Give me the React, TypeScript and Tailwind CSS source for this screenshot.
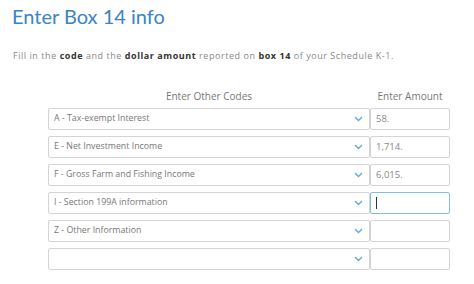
import React from 'react';

const rows = [
  { code: 'A - Tax-exempt Interest', amount: '58.' },
  { code: 'E - Net Investment Income', amount: '1,714.' },
  { code: 'F - Gross Farm and Fishing Income', amount: '6,015.' },
  { code: 'I - Section 199A information', amount: '', focused: true },
  { code: 'Z - Other Information', amount: '' },
  { code: '', amount: '' },
];

function Chevron() {
  return (
    <svg width="9" height="6" viewBox="0 0 9 6" fill="none">
      <path d="M1 1l3.5 3.5L8 1" stroke="#5fa9d8" strokeWidth="1.3" />
    </svg>
  );
}

export default function App() {
  return (
    <div
      className="w-[474px] h-[284px] bg-white overflow-hidden"
      style={{ fontFamily: '"Open Sans", "Noto Sans", sans-serif' }}
    >
      <h1
        className="pl-[12px] pt-[2px] text-[20px] leading-[28px] text-[#3a84c4] font-normal"
        style={{ fontFamily: 'Lato, sans-serif' }}
      >
        Enter Box 14 info
      </h1>
      <p className="pl-[13px] mt-[20px] text-[9px] leading-[12px] tracking-[0.55px] text-[#888]">
        Fill in the <b className="text-[#333] font-bold">code</b> and the{' '}
        <b className="text-[#333] font-bold">dollar amount</b> reported on{' '}
        <b className="text-[#333] font-bold">box 14</b> of your Schedule K-1.
      </p>
      <div className="ml-[48px] w-[402px] mt-[28px]">
        <div className="flex text-[10px] leading-[12px] text-[#777]">
          <div className="w-[322px] text-center">Enter Other Codes</div>
          <div className="w-[80px] text-center">Enter Amount</div>
        </div>
        <div className="mt-[6px] flex flex-col gap-[6px]">
          {rows.map((r, i) => (
            <div key={i} className="flex h-[22px]">
              <div className="w-[322px] flex items-center justify-between border border-[#d4d4d4] rounded-[2px] pl-[5px] pr-[6px]">
                <span className="text-[8.8px] text-[#777]">{r.code}</span>
                <Chevron />
              </div>
              <div
                className={
                  r.focused
                    ? 'w-[80px] flex items-center border border-[#7cc0e6] rounded-[2px] pl-[5px]'
                    : 'w-[80px] flex items-center border border-[#d4d4d4] rounded-[2px] pl-[5px]'
                }
              >
                {r.focused ? (
                  <span className="w-px h-[12px] bg-[#333]" />
                ) : (
                  <span className="text-[9.5px] text-[#888]">{r.amount}</span>
                )}
              </div>
            </div>
          ))}
        </div>
      </div>
    </div>
  );
}
